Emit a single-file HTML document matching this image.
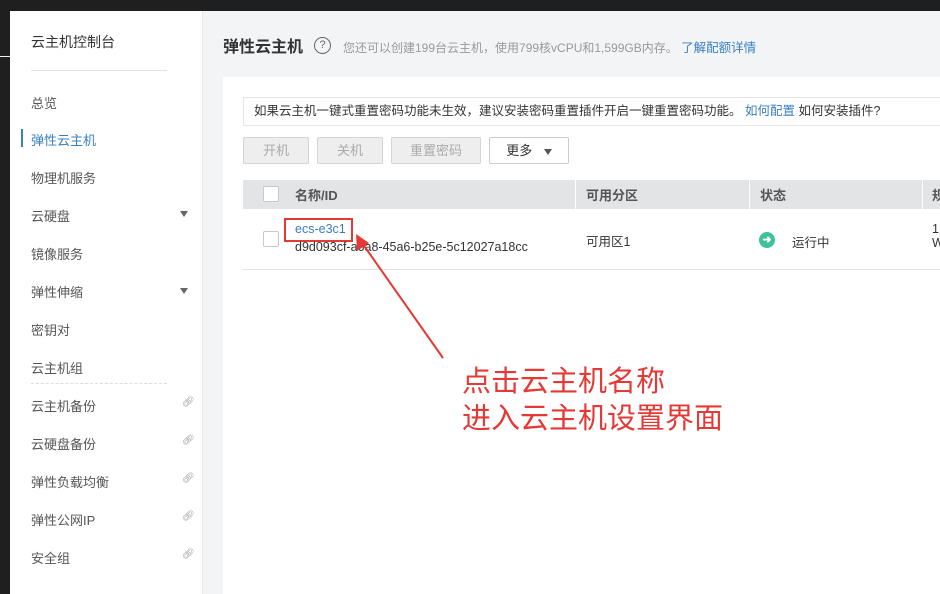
<!DOCTYPE html>
<html><head><meta charset="utf-8"><style>
*{margin:0;padding:0;box-sizing:border-box}
body{width:940px;height:594px;overflow:hidden;background:#f3f4f5;font-family:"Liberation Sans","Noto Sans CJK SC",sans-serif;position:relative;color:#333}
.a{position:absolute;white-space:nowrap}
.nav{left:31px;font-size:13px;color:#555}
.caret{position:absolute;left:180px;width:0;height:0;border-left:4px solid transparent;border-right:4px solid transparent;border-top:6px solid #666}
.link{position:absolute;left:182px;font-size:10px;color:#999}
.btn{position:absolute;top:137px;height:27px;border:1px solid #d5d5d5;background:#eeeeee;color:#aaa;font-size:13px;text-align:center;line-height:25px;border-radius:2px}
.cb{position:absolute;width:16px;height:16px;border:1px solid #c8c8c8;background:#fff;border-radius:2px}
.th{font-size:13px;color:#555;font-weight:bold;top:185px}
</style></head><body>
<div class="a" style="left:0;top:0;width:940px;height:11px;background:#1f1f1f"></div>
<div class="a" style="left:0;top:0;width:10px;height:594px;background:#1f1f1f"></div>
<div class="a" style="left:0;top:56px;width:10px;height:1px;background:#eee"></div>
<div class="a" style="left:10px;top:11px;width:193px;height:583px;background:#fff;border-right:1px solid #e8e8e8"></div>
<div class="a" style="left:31px;top:32px;font-size:14px;color:#333">云主机控制台</div>
<div class="a" style="left:31px;top:70px;width:136px;height:1px;background:#e3e3e3"></div>
<div class="a nav" style="top:93px">总览</div>
<div class="a" style="left:21px;top:129px;width:2px;height:18px;background:#3a7fc1"></div>
<div class="a nav" style="top:130px;color:#3a7fc1">弹性云主机</div>
<div class="a nav" style="top:168px">物理机服务</div>
<div class="a nav" style="top:206px">云硬盘</div><div class="caret" style="top:211px"></div>
<div class="a nav" style="top:244px">镜像服务</div>
<div class="a nav" style="top:282px">弹性伸缩</div><div class="caret" style="top:288px"></div>
<div class="a nav" style="top:320px">密钥对</div>
<div class="a nav" style="top:358px">云主机组</div>
<div class="a" style="left:31px;top:383px;width:136px;border-top:1px dashed #ddd"></div>
<div class="a nav" style="top:396px">云主机备份</div><div class="link" style="top:397px">🔗︎</div>
<div class="a nav" style="top:434px">云硬盘备份</div><div class="link" style="top:435px">🔗︎</div>
<div class="a nav" style="top:472px">弹性负载均衡</div><div class="link" style="top:473px">🔗︎</div>
<div class="a nav" style="top:510px">弹性公网IP</div><div class="link" style="top:511px">🔗︎</div>
<div class="a nav" style="top:548px">安全组</div><div class="link" style="top:549px">🔗︎</div>

<div class="a" style="left:223px;top:33px;font-size:16px;font-weight:bold;color:#333">弹性云主机</div>
<div class="a" style="left:314px;top:37px;width:17px;height:17px;border:1.5px solid #666;border-radius:50%;font-size:11px;line-height:14px;text-align:center;color:#666">?</div>
<div class="a" style="left:343px;top:37px;font-size:12px;color:#999">您还可以创建199台云主机，使用799核vCPU和1,599GB内存。 <span style="color:#3a7fc1;font-size:12.5px">了解配额详情</span></div>

<div class="a" style="left:223px;top:77px;width:717px;height:517px;background:#fff"></div>
<div class="a" style="left:243px;top:97px;width:700px;height:29px;border:1px solid #e5e5e5;font-size:12.5px;line-height:27px;padding-left:10px;color:#333">如果云主机一键式重置密码功能未生效，建议安装密码重置插件开启一键重置密码功能。 <span style="color:#3a7fc1">如何配置</span> 如何安装插件?</div>
<div class="btn" style="left:243px;width:66px">开机</div>
<div class="btn" style="left:317px;width:66px">关机</div>
<div class="btn" style="left:391px;width:90px">重置密码</div>
<div class="btn" style="left:489px;width:80px;background:#fff;color:#333;border-color:#ccc">更多 <span style="display:inline-block;margin-left:8px;vertical-align:middle;border-left:4px solid transparent;border-right:4px solid transparent;border-top:6px solid #555"></span></div>

<div class="a" style="left:243px;top:180px;width:697px;height:29px;background:#e3e4e5"></div>
<div class="a" style="left:575px;top:180px;width:1px;height:29px;background:#fff"></div>
<div class="a" style="left:749px;top:180px;width:1px;height:29px;background:#fff"></div>
<div class="a" style="left:922px;top:180px;width:1px;height:29px;background:#fff"></div>
<div class="cb" style="left:263px;top:186px"></div>
<div class="a th" style="left:295px">名称/ID</div>
<div class="a th" style="left:586px">可用分区</div>
<div class="a th" style="left:760px">状态</div>
<div class="a th" style="left:932px">规</div>
<div class="a" style="left:243px;top:269px;width:697px;height:1px;background:#e3e3e3"></div>
<div class="cb" style="left:263px;top:231px"></div>
<div class="a" style="left:295px;top:222px;font-size:12.5px;color:#3a7fc1">ecs-e3c1</div>
<div class="a" style="left:284px;top:218px;width:69px;height:24px;border:2.5px solid #e53935"></div>
<div class="a" style="left:295px;top:240px;font-size:12.5px;color:#333">d9d093cf-a6a8-45a6-b25e-5c12027a18cc</div>
<div class="a" style="left:586px;top:231px;font-size:12.5px;color:#333">可用区1</div>
<div class="a" style="left:759px;top:232px;width:16px;height:16px;border-radius:50%;background:#3ec29a;color:#fff;font-size:11px;line-height:16px;text-align:center;font-weight:bold">➜</div>
<div class="a" style="left:792px;top:232px;font-size:12.5px;color:#333">运行中</div>
<div class="a" style="left:932px;top:222px;font-size:12.5px;color:#333">1<br>W</div>

<svg class="a" style="left:0;top:0" width="940" height="594"><line x1="443" y1="358" x2="360" y2="240" stroke="#e53935" stroke-width="2"/><polygon points="356,234 357,251 369,243" fill="#e53935"/></svg>
<div class="a" style="left:462px;top:364px;font-size:29px;line-height:37px;color:#e53935">点击云主机名称<br>进入云主机设置界面</div>
</body></html>
